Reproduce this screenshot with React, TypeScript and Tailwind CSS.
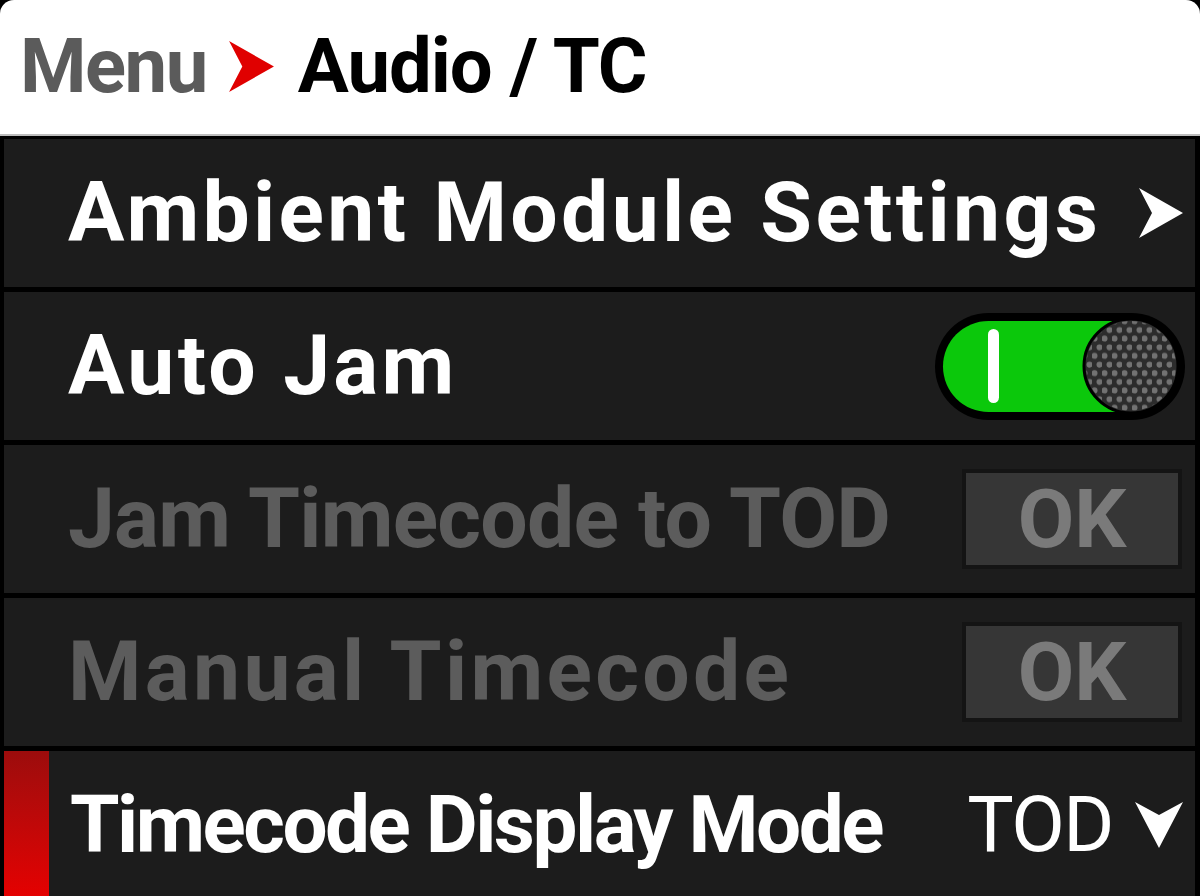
import React from 'react';

const Arrow = ({ className, color }: { className?: string; color: string }) => (
  <svg viewBox="0 0 44 50" className={className}>
    <path d="M0 0 L44 25 L0 50 L13 25 Z" fill={color} />
  </svg>
);

const DownArrow = ({ className }: { className?: string }) => (
  <svg viewBox="0 0 48 46" className={className}>
    <path d="M0 0 L24 46 L48 0 L24 13 Z" fill="#fff" />
  </svg>
);

const Toggle = () => (
  <div className="w-[250px] h-[107px] rounded-full bg-black p-[8px]">
    <div className="h-full rounded-full bg-[#0bc80b] flex items-center justify-between">
      <div className="ml-[45px] w-[11px] h-[74px] rounded-full bg-white" />
      <svg viewBox="0 0 98 98" className="w-[98px] h-[98px] -mr-[3px]">
        <defs>
          <pattern id="dots" width="10" height="17.3" patternUnits="userSpaceOnUse">
            <circle cx="2.5" cy="4.3" r="3" fill="#727272" />
            <circle cx="7.5" cy="13" r="3" fill="#727272" />
          </pattern>
        </defs>
        <circle cx="49" cy="49" r="47" fill="#2c2c2c" stroke="#000" strokeWidth="3" />
        <circle cx="49" cy="49" r="45" fill="url(#dots)" />
      </svg>
    </div>
  </div>
);

const OkButton = () => (
  <div className="w-[220px] h-[100px] bg-[#141414] p-[4px] mr-[13px] shrink-0">
    <div className="h-full bg-[#363636] flex items-center justify-center text-[82px] font-bold text-[#7a7a7a] leading-none">
      OK
    </div>
  </div>
);

const Row = ({ children, marker }: { children: React.ReactNode; marker?: boolean }) => (
  <div className="h-[148px] bg-[#1c1c1c] flex items-center relative shrink-0">
    {marker && <div className="absolute left-0 top-0 bottom-0 w-[45px] bg-gradient-to-b from-[#9c0c0c] to-[#e60000]" />}
    {children}
  </div>
);

export default function App() {
  return (
    <div className="w-[1200px] h-[896px] bg-black overflow-hidden flex flex-col font-['Roboto',sans-serif]">
      <div className="h-[136px] shrink-0 bg-white rounded-t-[14px] border-b-[2px] border-[#bdbdbd] flex items-center pl-[20px] pb-[2px]">
        <span className="text-[76px] font-bold text-[#5b5b5b] leading-none tracking-[-1.5px]">Menu</span>
        <Arrow className="w-[45px] h-[51px] ml-[22px] mr-[24px]" color="#e00000" />
        <span className="text-[76px] font-bold text-black leading-none tracking-[-1px]">Audio / TC</span>
      </div>
      <div className="flex flex-col gap-[5px] pt-[3px] pl-[4px] pr-[5px]">
        <Row>
          <span className="ml-[64px] text-[84px] font-bold text-white leading-none flex-1 whitespace-nowrap tracking-[3.3px]">Ambient Module Settings</span>
          <Arrow className="w-[44px] h-[50px] mr-[12px]" color="#fff" />
        </Row>
        <Row>
          <span className="ml-[64px] text-[84px] font-bold text-white leading-none flex-1 whitespace-nowrap tracking-[3.3px]">Auto Jam</span>
          <div className="mr-[10px]">
            <Toggle />
          </div>
        </Row>
        <Row>
          <span className="ml-[64px] text-[84px] font-bold text-[#5c5c5c] leading-none flex-1 whitespace-nowrap tracking-[-0.8px]">Jam Timecode to TOD</span>
          <OkButton />
        </Row>
        <Row>
          <span className="ml-[64px] text-[84px] font-bold text-[#5c5c5c] leading-none flex-1 whitespace-nowrap tracking-[3.3px]">Manual Timecode</span>
          <OkButton />
        </Row>
        <Row marker>
          <span className="ml-[66px] text-[80px] font-bold text-white leading-none flex-1 whitespace-nowrap tracking-[-2.5px]">Timecode Display Mode</span>
          <span className="text-[78px] text-white leading-none tracking-[-1.5px]">TOD</span>
          <DownArrow className="w-[48px] h-[46px] ml-[22px] mr-[12px]" />
        </Row>
      </div>
    </div>
  );
}
